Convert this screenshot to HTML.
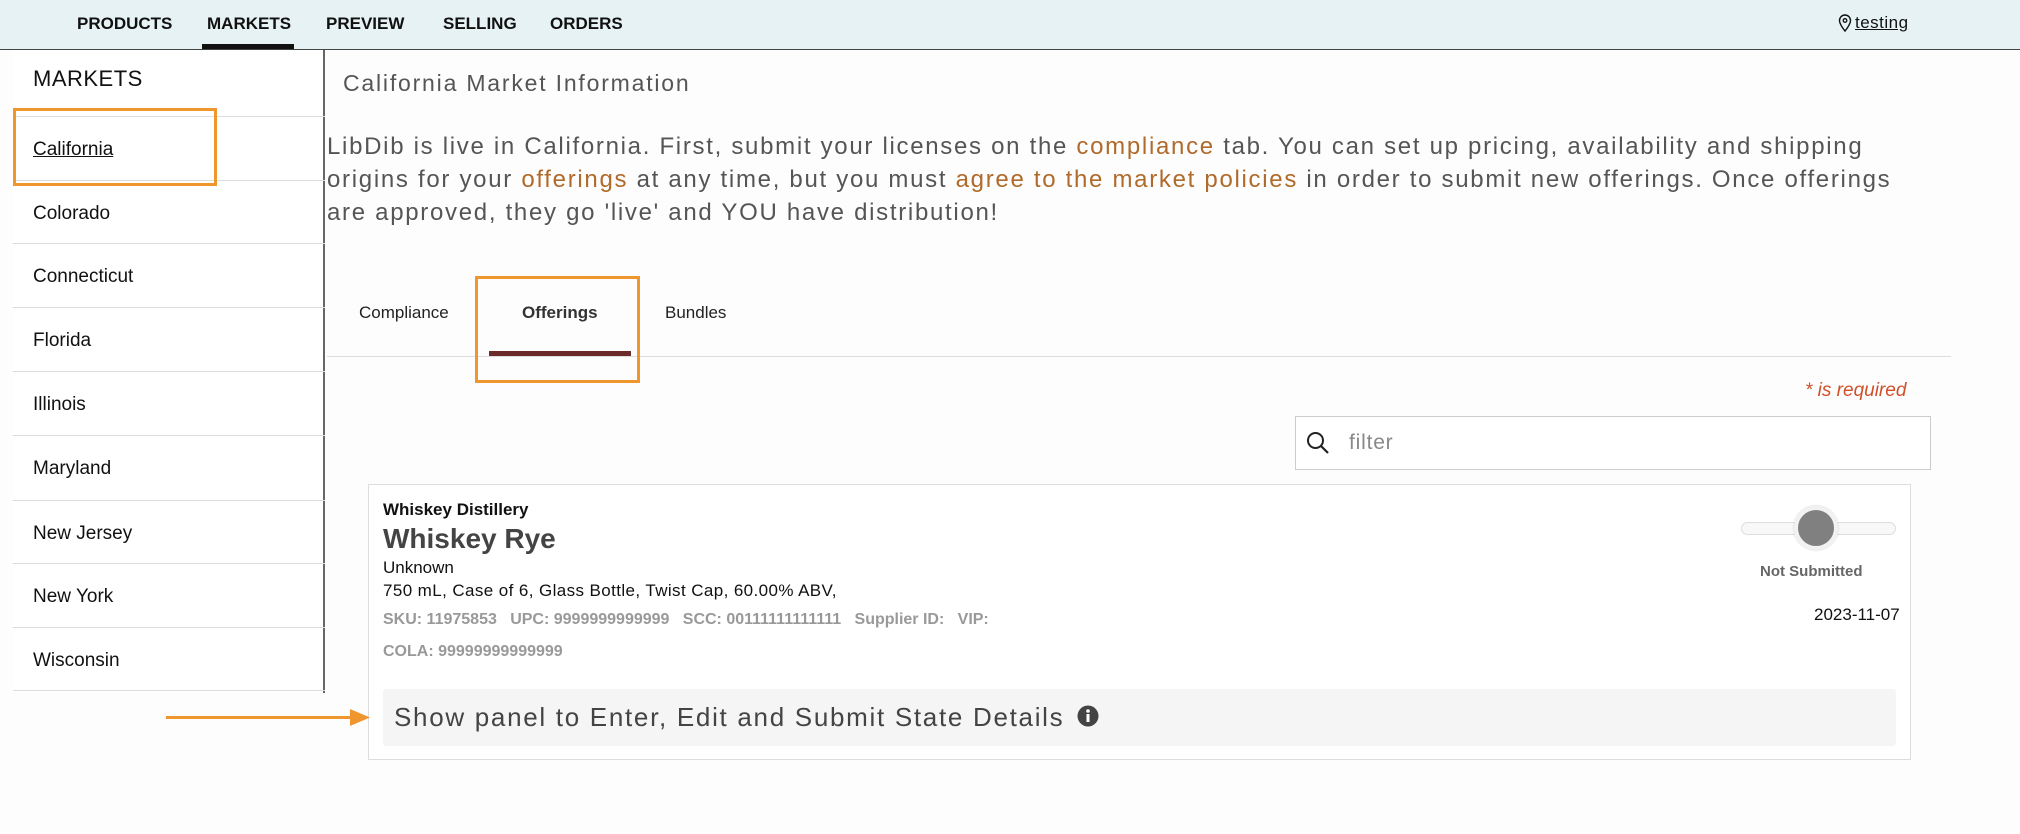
<!DOCTYPE html>
<html><head><meta charset="utf-8"><style>
*{margin:0;padding:0;box-sizing:border-box}
body{width:2020px;height:834px;background:#fdfdfd;font-family:"Liberation Sans",sans-serif;color:#333;position:relative;overflow:hidden}
.a{position:absolute;white-space:nowrap}
.nav{position:absolute;left:0;top:0;width:2020px;height:50px;background:#e7f2f4;border-bottom:1.5px solid #444}
.nav span{position:absolute;top:14px;font-size:17px;font-weight:bold;color:#111}
.side{position:absolute;left:13px;top:50px;width:312px;height:643px;border-right:2px solid #666;background:#fff}
.row{position:absolute;left:0;width:312px;height:64px;border-top:1px solid #ddd;font-size:19px;color:#111;padding-left:20px;line-height:66px}
.p{font-size:24px;color:#555;line-height:33px;letter-spacing:1.7px}
.p b{font-weight:normal;color:#b06a2a}
.ob{position:absolute;border:3px solid #f0962f}
</style></head><body>
<div class="nav">
<span style="left:77px">PRODUCTS</span>
<span style="left:207px">MARKETS</span>
<span style="left:326px">PREVIEW</span>
<span style="left:443px">SELLING</span>
<span style="left:550px">ORDERS</span>
<div class="a" style="left:202px;top:44px;width:92px;height:5px;background:#111"></div>
<svg class="a" style="left:1838px;top:14px" width="14" height="18" viewBox="0 0 14 18"><path d="M7 17C7 17 1.5 10.5 1.5 6.5a5.5 5.5 0 0 1 11 0C12.5 10.5 7 17 7 17z" fill="none" stroke="#111" stroke-width="1.4"/><circle cx="7" cy="6.5" r="1.8" fill="none" stroke="#111" stroke-width="1.3"/></svg>
<span style="left:1855px;top:13px;font-weight:normal;text-decoration:underline;font-size:17px;letter-spacing:0.5px">testing</span>
</div>
<div class="side">
<div class="a" style="left:20px;top:16px;font-size:22px;color:#111;letter-spacing:0.5px">MARKETS</div>
<div class="row" style="top:66px"><u>California</u></div>
<div class="row" style="top:130px">Colorado</div>
<div class="row" style="top:193px">Connecticut</div>
<div class="row" style="top:257px">Florida</div>
<div class="row" style="top:321px">Illinois</div>
<div class="row" style="top:385px">Maryland</div>
<div class="row" style="top:450px">New Jersey</div>
<div class="row" style="top:513px">New York</div>
<div class="row" style="top:577px;border-bottom:1px solid #ddd">Wisconsin</div>
</div>
<div class="ob" style="left:13px;top:108px;width:204px;height:78px"></div>
<div class="a" style="left:343px;top:70px;font-size:23px;color:#555;letter-spacing:1.8px">California Market Information</div>
<div class="a p" style="left:327px;top:130px">LibDib is live in California. First, submit your licenses on the <b>compliance</b> tab. You can set up pricing, availability and shipping<br>origins for your <b>offerings</b> at any time, but you must <b>agree to the market policies</b> in order to submit new offerings. Once offerings<br>are approved, they go 'live' and YOU have distribution!</div>
<div class="a" style="left:359px;top:303px;font-size:17px;color:#222">Compliance</div>
<div class="a" style="left:522px;top:303px;font-size:17px;font-weight:bold;color:#333">Offerings</div>
<div class="a" style="left:665px;top:303px;font-size:17px;color:#222">Bundles</div>
<div class="a" style="left:489px;top:351px;width:142px;height:5px;background:#6b2b2b"></div>
<div class="a" style="left:327px;top:356px;width:1624px;height:1px;background:#ddd"></div>
<div class="ob" style="left:475px;top:276px;width:165px;height:107px"></div>
<div class="a" style="left:1805px;top:380px;font-size:19px;font-style:italic;color:#d0502a">* is required</div>
<div class="a" style="left:1295px;top:416px;width:636px;height:54px;border:1.5px solid #ccc;background:#fff"></div>
<svg class="a" style="left:1306px;top:431px" width="24" height="24" viewBox="0 0 24 24"><circle cx="9.5" cy="9.5" r="7.5" fill="none" stroke="#222" stroke-width="2"/><path d="M15 15l7 7" stroke="#222" stroke-width="2.2"/></svg>
<div class="a" style="left:1349px;top:431px;font-size:21px;color:#888;letter-spacing:0.8px">filter</div>
<div class="a" style="left:368px;top:484px;width:1543px;height:276px;border:1.5px solid #ddd;background:#fff"></div>
<div class="a" style="left:383px;top:500px;font-size:17px;font-weight:bold;color:#111">Whiskey Distillery</div>
<div class="a" style="left:383px;top:523px;font-size:28px;font-weight:bold;color:#444">Whiskey Rye</div>
<div class="a" style="left:383px;top:558px;font-size:17px;color:#111">Unknown</div>
<div class="a" style="left:383px;top:581px;font-size:17px;color:#111;letter-spacing:0.4px">750 mL, Case of 6, Glass Bottle, Twist Cap, 60.00% ABV,</div>
<div class="a" style="left:383px;top:611px;font-size:16px;font-weight:bold;color:#999">SKU: 11975853 &nbsp; UPC: 9999999999999 &nbsp; SCC: 00111111111111 &nbsp; Supplier ID: &nbsp; VIP:</div>
<div class="a" style="left:383px;top:643px;font-size:16px;font-weight:bold;color:#999">COLA: 99999999999999</div>
<div class="a" style="left:1741px;top:522px;width:155px;height:13px;border:1px solid #ddd;border-radius:7px;background:#f8f8f8"></div>
<div class="a" style="left:1794px;top:506px;width:44px;height:44px;border-radius:50%;background:#808080;border:4px solid #f2f2f2;box-shadow:0 0 2px #ccc"></div>
<div class="a" style="left:1760px;top:563px;font-size:15px;font-weight:bold;color:#666">Not Submitted</div>
<div class="a" style="left:1814px;top:605px;font-size:17px;color:#111">2023-11-07</div>
<div class="a" style="left:383px;top:689px;width:1513px;height:57px;background:#f5f5f5;border-radius:3px"></div>
<div class="a" style="left:394px;top:702px;font-size:26px;color:#444;letter-spacing:1.7px">Show panel to Enter, Edit and Submit State Details</div>
<svg class="a" style="left:1077px;top:705px" width="22" height="22" viewBox="0 0 22 22"><circle cx="11" cy="11" r="10.5" fill="#444"/><rect x="9.5" y="9" width="3" height="8" fill="#fff"/><circle cx="11" cy="6" r="1.8" fill="#fff"/></svg>
<div class="a" style="left:166px;top:716px;width:190px;height:3px;background:#f0962f"></div>
<svg class="a" style="left:350px;top:709px" width="20" height="17" viewBox="0 0 20 17"><path d="M0 0L20 8.5L0 17z" fill="#f0962f"/></svg>
</body></html>
